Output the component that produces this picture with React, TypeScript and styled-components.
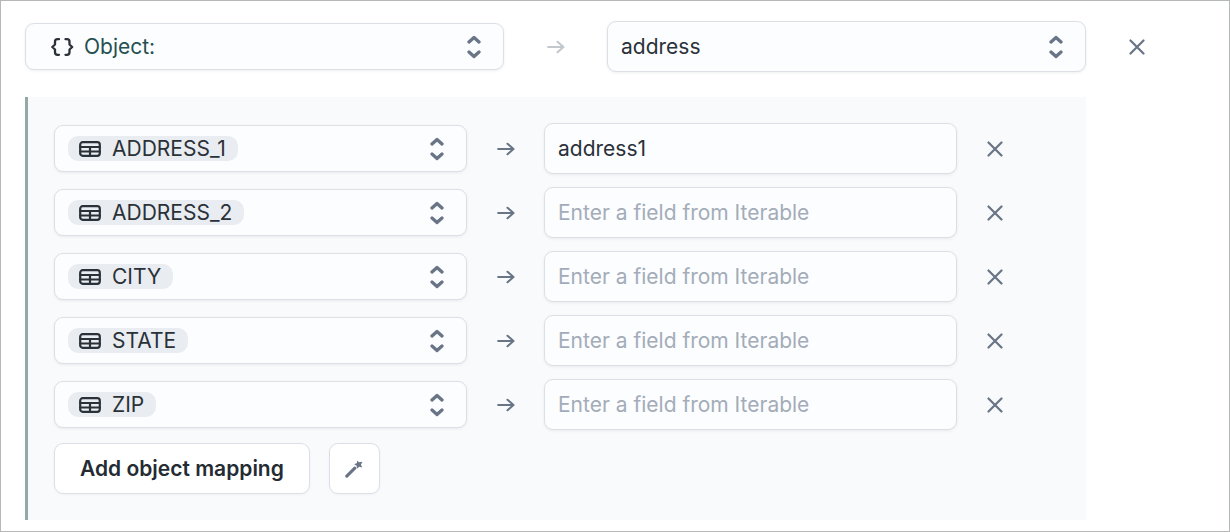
import React, { useState } from "react";
import styled, { createGlobalStyle } from "styled-components";

const GlobalStyle = createGlobalStyle`
  *, *::before, *::after { box-sizing: border-box; }
  body {
    margin: 0;
    background: #ffffff;
    color: #2a3138;
    font-family: Inter, "Liberation Sans", sans-serif;
    font-size: 21px;
    font-weight: 400;
    line-height: 24px;
  }
  button, input, select { font: inherit; color: inherit; }
`;

const Page = styled.main`
  min-height: 100vh;
  padding: 20px 0 11px 24px;
  border: 1px solid #b6b7b8;
  display: flex;
  flex-direction: column;
  gap: 25px;
`;

const ObjectRow = styled.div`
  display: grid;
  grid-template-columns: minmax(0, 1fr) 103px minmax(0, 1fr) 101px;
  align-items: center;
  padding-right: 42px;
`;

const Panel = styled.section`
  margin-right: 143px;
  padding: 26px 0 26px 26px;
  border-left: 3px solid #93a8a8;
  background: #f9fafc;
  display: flex;
  flex-direction: column;
  gap: 13px;
`;

const MappingRow = styled.div`
  display: grid;
  grid-template-columns: minmax(0, 1fr) 77px minmax(0, 1fr) 76px;
  align-items: center;
  padding-right: 53px;
`;

const Field = styled.label<{ $tall?: boolean; $indent?: boolean }>`
  display: flex;
  align-items: center;
  gap: 10px;
  height: ${(p) => (p.$tall ? 51 : 47)}px;
  padding: 0 22px 0 ${(p) => (p.$indent ? 25 : 13)}px;
  border: 1px solid #dce0e6;
  border-radius: 9px;
  background: #fcfdff;
  box-shadow: 0 1px 3px rgba(30, 45, 65, 0.08);
`;

const Select = styled.select<{ $teal?: boolean }>`
  appearance: none;
  flex: 1;
  min-width: 0;
  height: 30px;
  padding: 0;
  border: 0;
  outline: 0;
  background: transparent;
  color: ${(p) => (p.$teal ? "#24504f" : "#2a3138")};
`;

const Chip = styled.span`
  display: inline-flex;
  align-items: center;
  gap: 11px;
  height: 25px;
  padding: 0 12px 0 11px;
  border-radius: 10px;
  background: #e9ecf1;
`;

const ChipSelect = styled.select`
  appearance: none;
  field-sizing: content;
  height: 25px;
  padding: 0;
  border: 0;
  outline: 0;
  background: transparent;
`;

const Spacer = styled.span`
  flex: 1;
`;

const TextInput = styled.input`
  width: 100%;
  height: 51px;
  padding: 0 13px;
  border: 1px solid #dce0e6;
  border-radius: 9px;
  outline: 0;
  background: #fcfdff;
  box-shadow: 0 1px 3px rgba(30, 45, 65, 0.08);
  &::placeholder { color: #a3acb8; opacity: 1; }
`;

const ArrowCell = styled.span<{ $faint?: boolean }>`
  display: flex;
  justify-content: center;
  color: ${(p) => (p.$faint ? "#c3c8ce" : "#697586")};
`;

const RemoveButton = styled.button`
  justify-self: center;
  display: flex;
  padding: 8px;
  border: 0;
  background: transparent;
  color: #697586;
  cursor: pointer;
`;

const Actions = styled.div`
  display: flex;
  gap: 19px;
`;

const ActionButton = styled.button<{ $square?: boolean }>`
  display: flex;
  align-items: center;
  justify-content: center;
  height: 51px;
  min-width: 51px;
  padding: 0 ${(p) => (p.$square ? 0 : 25)}px;
  border: 1px solid #dce0e6;
  border-radius: 9px;
  background: #ffffff;
  color: ${(p) => (p.$square ? "#697586" : "#242b33")};
  font-weight: 600;
  box-shadow: 0 1px 3px rgba(30, 45, 65, 0.04);
  cursor: pointer;
`;

const line = {
  fill: "none",
  stroke: "currentColor",
  strokeLinecap: "round",
  strokeLinejoin: "round",
} as const;

const BracesIcon = () => (
  <svg width="23" height="18" viewBox="0 0 23 18" {...line} strokeWidth="2.300" aria-hidden="true">
    <path d="M8 1.200H6.500Q4 1.200 4 3.700V6.500L1.300 9L4 11.500V14.300Q4 16.800 6.500 16.800H8" />
    <path d="M14.500 1.200H16Q18.500 1.200 18.500 3.700V6.500L21.200 9L18.500 11.500V14.300Q18.500 16.800 16 16.800H14.500" />
  </svg>
);

const TableIcon = () => (
  <svg width="22" height="16" viewBox="0 0 22 16" {...line} strokeWidth="2.200" aria-hidden="true">
    <rect x="1.200" y="1.200" width="19.600" height="13.600" rx="2.500" />
    <path d="M1.200 6H20.800M1.200 10.500H20.800M11 6V14.800" />
  </svg>
);

const ChevronsIcon = () => (
  <svg width="14" height="24" viewBox="0 0 14 24" {...line} stroke="#697586" strokeWidth="3.300" aria-hidden="true">
    <path d="M2 7L7 2.500L12 7M2 17L7 21.500L12 17" />
  </svg>
);

const ArrowIcon = () => (
  <svg width="18" height="14" viewBox="0 0 18 14" {...line} strokeWidth="2.100" aria-hidden="true">
    <path d="M1.200 7H16.500M10.500 1.800L16.500 7L10.500 12.200" />
  </svg>
);

const CloseIcon = () => (
  <svg width="16" height="16" viewBox="0 0 16 16" {...line} strokeWidth="2.200" aria-hidden="true">
    <path d="M1.500 1.500L14.500 14.500M14.500 1.500L1.500 14.500" />
  </svg>
);

const WandIcon = () => (
  <svg width="18" height="18" viewBox="0 0 18 18" aria-hidden="true">
    <path d="M1.800 16.200L9.800 8.200" stroke="currentColor" strokeWidth="3.100" strokeLinecap="round" />
    <path
      d="M12.200 0.500L14 2.200L17.500 1.800L15.900 4.500L17.200 7.400L14.200 6.800L11.900 8.800L11.700 5.700L9.200 4.200L12 3.100Z"
      fill="currentColor"
    />
  </svg>
);

const columns = ["ADDRESS_1", "ADDRESS_2", "CITY", "STATE", "ZIP"];

export default function App() {
  const [sources, setSources] = useState(columns);
  const [targets, setTargets] = useState(["address1", "", "", "", ""]);
  const replace = (list: string[], index: number, value: string) =>
    list.map((item, i) => (i === index ? value : item));

  return (
    <>
      <GlobalStyle />
      <Page>
        <ObjectRow>
          <Field $indent>
            <BracesIcon />
            <Select $teal aria-label="Source type">
              <option>Object:</option>
            </Select>
            <ChevronsIcon />
          </Field>
          <ArrowCell $faint>
            <ArrowIcon />
          </ArrowCell>
          <Field $tall>
            <Select aria-label="Destination object">
              <option>address</option>
            </Select>
            <ChevronsIcon />
          </Field>
          <RemoveButton type="button" aria-label="Remove object">
            <CloseIcon />
          </RemoveButton>
        </ObjectRow>
        <Panel>
          {sources.map((source, index) => (
            <MappingRow key={index}>
              <Field>
                <Chip>
                  <TableIcon />
                  <ChipSelect
                    aria-label="Source column"
                    value={source}
                    onChange={(e) => setSources(replace(sources, index, e.target.value))}
                  >
                    {columns.map((column) => (
                      <option key={column}>{column}</option>
                    ))}
                  </ChipSelect>
                </Chip>
                <Spacer />
                <ChevronsIcon />
              </Field>
              <ArrowCell>
                <ArrowIcon />
              </ArrowCell>
              <TextInput
                aria-label="Destination field"
                placeholder="Enter a field from Iterable"
                value={targets[index]}
                onChange={(e) => setTargets(replace(targets, index, e.target.value))}
              />
              <RemoveButton type="button" aria-label="Remove mapping">
                <CloseIcon />
              </RemoveButton>
            </MappingRow>
          ))}
          <Actions>
            <ActionButton type="button">Add object mapping</ActionButton>
            <ActionButton type="button" $square aria-label="Suggest mappings">
              <WandIcon />
            </ActionButton>
          </Actions>
        </Panel>
      </Page>
    </>
  );
}
